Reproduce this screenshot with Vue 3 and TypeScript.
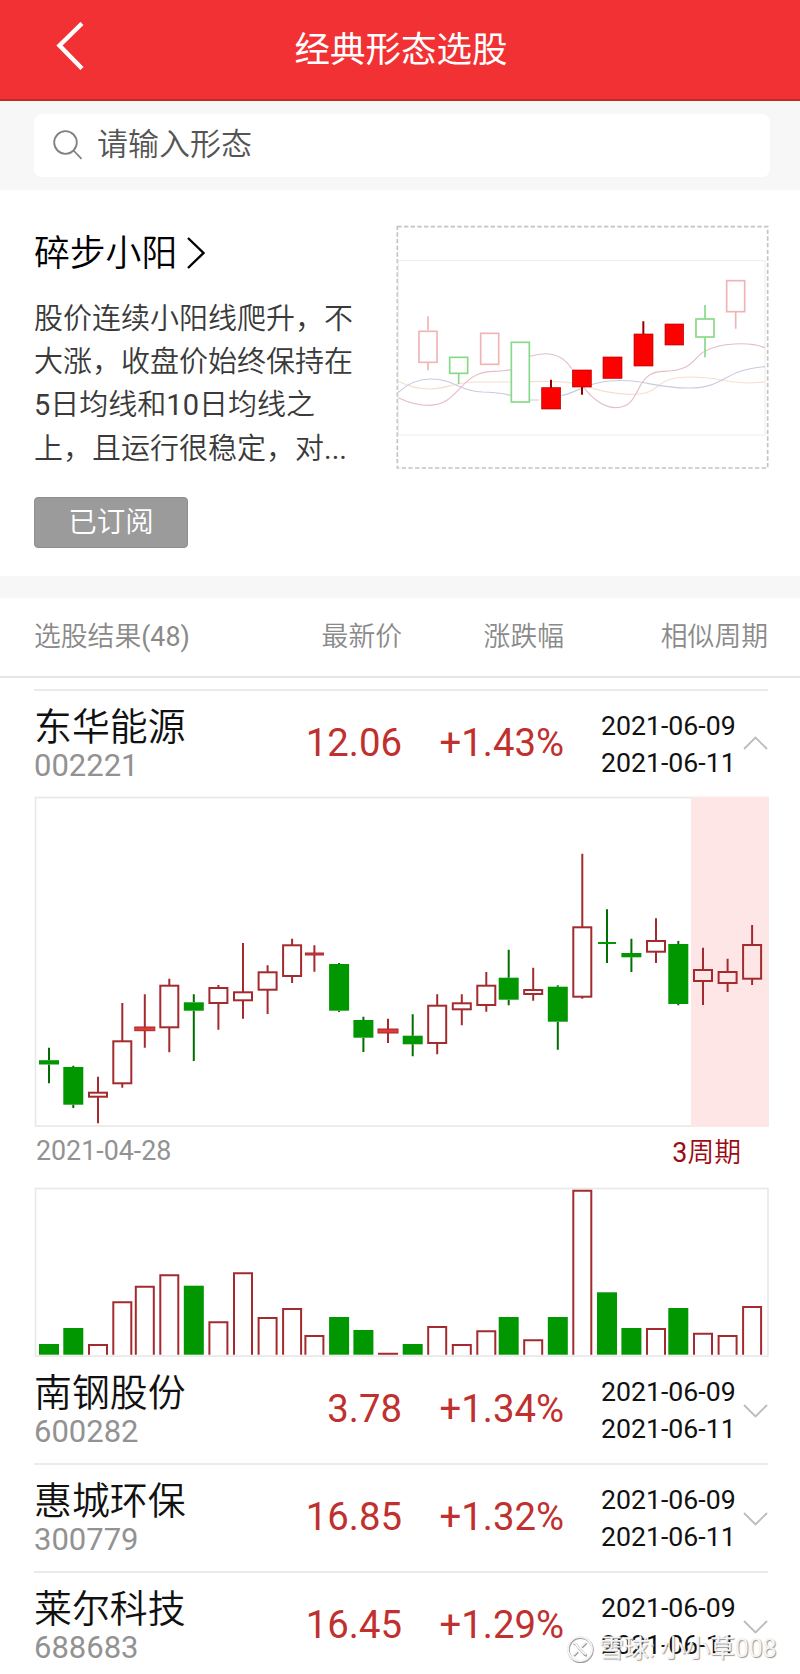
<script setup lang="ts">
type Tone = 'up' | 'down'
// x centre, wick top, body top, body bottom, wick bottom, tone, volume top
type Candle = [number, number, number, number, number, Tone, number]

interface Stock {
  name: string
  code: string
  price: string
  change: string
  from: string
  to: string
}

const candles: Candle[] = [
  [49, 1047.8, 1060.2, 1064.5, 1083.3, 'down', 1344],
  [73.3, 1065.7, 1067, 1104.7, 1108, 'down', 1328],
  [98, 1076.7, 1091.7, 1097.7, 1123.3, 'up', 1344],
  [122.3, 1003, 1040.3, 1084.3, 1087.7, 'up', 1301.3],
  [144.8, 994.3, 1027, 1030.7, 1047.7, 'up', 1285.7],
  [169.3, 978.7, 984.7, 1028.3, 1052.3, 'up', 1274.3],
  [193.8, 994.3, 1002.3, 1010.7, 1061, 'down', 1285.7],
  [218.4, 985, 987, 1004, 1029.7, 'up', 1321.3],
  [243, 943, 991.3, 1001.3, 1018.7, 'up', 1272.3],
  [267.6, 965.3, 971.3, 990.7, 1014, 'up', 1317],
  [292.1, 938.7, 944.3, 977, 983, 'up', 1308],
  [314.4, 945.3, 953, 955, 971.7, 'up', 1335],
  [339.1, 963, 964, 1010.7, 1012, 'down', 1317],
  [363.4, 1016.7, 1020, 1037.7, 1052, 'down', 1330],
  [388, 1018.7, 1029, 1033, 1043, 'up', 1352.7],
  [412.7, 1014.3, 1035.7, 1044.3, 1056.3, 'down', 1344],
  [437.2, 994.3, 1004.7, 1044, 1054.3, 'up', 1326],
  [461.8, 994.3, 1002.3, 1010.3, 1025.3, 'up', 1344],
  [486.3, 972, 984.7, 1006, 1011.7, 'up', 1330.3],
  [508.7, 949.7, 977.7, 999.7, 1005.3, 'down', 1317],
  [533.2, 967.7, 989, 995, 1000.7, 'up', 1339.3],
  [557.8, 985.3, 986.7, 1021.7, 1049.7, 'down', 1317],
  [582.3, 853.7, 926.3, 997.7, 998.7, 'up', 1189.7],
  [607, 909.3, 942, 944, 963, 'down', 1292.3],
  [631.4, 938.7, 953, 957.3, 972, 'down', 1328],
  [656, 918.3, 940, 952.7, 963, 'up', 1328],
  [678.3, 941, 944, 1004, 1005.3, 'down', 1308],
  [703, 947.7, 969, 982, 1005, 'up', 1332.7],
  [727.6, 958.7, 971, 984, 992, 'up', 1335],
  [752.1, 925, 944, 979.7, 985, 'up', 1306],
]

const baseline = 1354.7

const bars = candles.map(([x, high, top, bottom, low, tone, volume]) => {
  const height = bottom - top
  const half = height < 3 ? 9 : 10
  const hollow = tone === 'up' && height > 5
  const inset = hollow ? 1 : 0
  return {
    tone,
    hollow,
    wick: `M${x} ${high}V${top + inset}M${x} ${bottom - inset}V${low}`,
    x: x - half + inset,
    y: top + inset,
    w: (half - inset) * 2,
    h: height - inset * 2,
    vx: x - 10,
    vy: volume,
    vh: baseline - volume,
    volume: `M${x - 9} ${baseline}V${volume + 1}H${x + 9}V${baseline}`,
  }
})

const featured: Stock = {
  name: '东华能源', code: '002221', price: '12.06', change: '+1.43%', from: '2021-06-09', to: '2021-06-11',
}
const others: Stock[] = [
  { name: '南钢股份', code: '600282', price: '3.78', change: '+1.34%', from: '2021-06-09', to: '2021-06-11' },
  { name: '惠城环保', code: '300779', price: '16.85', change: '+1.32%', from: '2021-06-09', to: '2021-06-11' },
  { name: '莱尔科技', code: '688683', price: '16.45', change: '+1.29%', from: '2021-06-09', to: '2021-06-11' },
]
</script>

<template>
  <div class="page">
    <header class="bar">
      <svg class="back" width="28" height="48" viewBox="0 0 28 48">
        <path d="M26 1.5L3.5 23.5L26 46.5" />
      </svg>
      <h1>经典形态选股</h1>
    </header>

    <div class="search-wrap">
      <div class="search">
        <svg width="30" height="30" viewBox="0 0 30 30">
          <circle cx="12.5" cy="12.5" r="11.3" />
          <path d="M20.5 20.5L28.5 28.8" />
        </svg>
        <span>请输入形态</span>
      </div>
    </div>

    <section class="pattern">
      <div class="intro">
        <h2>
          <span>碎步小阳</span>
          <svg width="20" height="34" viewBox="0 0 20 34"><path d="M2 2L17.5 17L2 32" /></svg>
        </h2>
        <p>股价连续小阳线爬升，不<br />大涨，收盘价始终保持在<br /><span class="latin">5</span>日均线和<span class="latin">10</span>日均线之<br />上，且运行很稳定，对<span class="latin">...</span></p>
        <button type="button">已订阅</button>
      </div>
      <svg class="preview" width="374" height="245" viewBox="50 46 1122 735">
        <rect class="dash" x="54" y="51" width="1111" height="724" />
        <rect class="inner" x="57" y="153" width="1100" height="523" />
        <path class="ma orange" d="M57 515C90 532 115 538 150 538C200 538 225 517 290 517L395 517M452 516C510 514 560 514 600 524C660 542 690 552 750 554C860 556 810 503 930 502C1020 502 1040 520 1110 520L1157 517" />
        <path class="ma blue" d="M57 548C85 522 115 508 155 508C225 508 240 545 310 547C350 547 370 552 395 557M452 571H480M546 558C590 550 620 520 690 514C800 506 810 535 930 535C1040 535 1030 480 1157 471" />
        <path class="ma pink" d="M57 564C90 580 115 587 150 587C240 587 240 487 340 485C360 485 378 483 395 480M452 440C510 422 550 435 577 477M613 533C650 580 680 594 710 594C790 594 760 488 850 485C950 483 940 440 978 424C1020 400 1110 395 1157 414" />
        <g class="pink-candle">
          <path d="M146 320V362M146 459V482M1069 307V357" />
          <rect x="119" y="365" width="54" height="93" />
          <rect x="304" y="371" width="54" height="93" />
          <rect x="1042" y="213" width="54" height="93" />
        </g>
        <g class="green-candle">
          <path d="M238 492V523M977 286V327M977 383V443" />
          <rect x="211" y="443" width="54" height="48" />
          <rect x="396" y="398" width="54" height="179" />
          <rect x="950" y="328" width="54" height="54" />
        </g>
        <g class="red-candle">
          <path d="M515 510V535M608 530V555M792 335V373" />
          <rect x="487" y="534" width="57" height="64" />
          <rect x="579" y="481" width="57" height="51" />
          <rect x="671" y="442" width="57" height="64" />
          <rect x="764" y="373" width="57" height="96" />
          <rect x="857" y="343" width="56" height="63" />
        </g>
      </svg>
    </section>

    <div class="columns">
      <span>选股结果<span class="latin">(48)</span></span>
      <span class="num">最新价</span>
      <span class="num">涨跌幅</span>
      <span class="num">相似周期</span>
    </div>

    <main class="list">
      <article class="row">
        <div class="who"><b>{{ featured.name }}</b><i>{{ featured.code }}</i></div>
        <span class="figure">{{ featured.price }}</span>
        <span class="figure">{{ featured.change }}</span>
        <div class="dates"><span>{{ featured.from }}</span><span>{{ featured.to }}</span></div>
        <svg class="fold" width="25" height="14" viewBox="0 0 25 14"><path d="M1 13L12.5 1.5L24 13" /></svg>
      </article>

      <svg class="chart" width="736" height="331" viewBox="34 796 736 331">
        <rect class="frame" x="35.5" y="797.5" width="732.5" height="328.5" />
        <rect class="window" x="691" y="797" width="77.6" height="330" />
        <g v-for="(b, i) in bars" :key="i" :class="[b.tone, { hollow: b.hollow }]">
          <path :d="b.wick" />
          <rect :x="b.x" :y="b.y" :width="b.w" :height="b.h" />
        </g>
      </svg>
      <div class="axis"><span>2021-04-28</span><em><span class="latin">3</span>周期</em></div>
      <svg class="chart" width="736" height="170" viewBox="34 1187 736 170">
        <rect class="frame" x="35.5" y="1188.5" width="732.5" height="167.5" />
        <g v-for="(b, i) in bars" :key="i" :class="['vol', b.tone]">
          <path v-if="b.tone === 'up'" :d="b.volume" />
          <rect v-else :x="b.vx" :y="b.vy" width="20" :height="b.vh" />
        </g>
      </svg>

      <article v-for="s in others" :key="s.code" class="row lined">
        <div class="who"><b>{{ s.name }}</b><i>{{ s.code }}</i></div>
        <span class="figure">{{ s.price }}</span>
        <span class="figure">{{ s.change }}</span>
        <div class="dates"><span>{{ s.from }}</span><span>{{ s.to }}</span></div>
        <svg class="fold" width="25" height="14" viewBox="0 0 25 14"><path d="M1 1L12.5 12.5L24 1" /></svg>
      </article>
    </main>

    <div class="watermark">
      <svg width="28" height="28" viewBox="0 0 28 28">
        <circle class="shade" cx="14.6" cy="14.8" r="12" />
        <circle class="ring" cx="14" cy="14" r="12" />
        <path class="shade" d="M7.5 8.5C12 9 11.5 13 14 14.5C16.5 16 17 20 21 20.5M20.5 8L16 12.5M12 17L8 21" />
        <path class="ring" d="M6.8 7.5C11.3 8 10.8 12 13.3 13.5C15.8 15 16.3 19 20.3 19.5M19.8 7L15.3 11.5M11.3 16L7.3 20" />
      </svg>
      <span>雪球: 小小草008</span>
    </div>
  </div>
</template>

<style>
body {
  margin: 0;
  background: #fff;
}
</style>

<style scoped>
.page {
  position: relative;
  width: 800px;
  height: 1674px;
  overflow: hidden;
  background: #fff;
  font-family: Roboto, "Noto Sans CJK SC", sans-serif;
  font-weight: 350;
  color: #111;
}
.latin {
  font-weight: 400;
}
svg {
  display: block;
  flex: none;
  fill: none;
}
.bar {
  box-sizing: border-box;
  display: grid;
  grid-template-columns: 100px 1fr 98px;
  align-items: center;
  height: 101px;
  background: #f13133;
  border-bottom: 2px solid #c22a26;
}
.back {
  margin: -7px 0 0 56px;
}
.back path {
  stroke: #fff;
  stroke-width: 4.4;
}
h1 {
  margin: 0;
  color: #fff;
  font-size: 35.5px;
  font-weight: 400;
  text-align: center;
  line-height: 50px;
}
.search-wrap {
  box-sizing: border-box;
  height: 89px;
  padding: 13px 30px 0 34px;
  background: #f7f7f7;
}
.search {
  box-sizing: border-box;
  display: flex;
  align-items: center;
  gap: 14px;
  height: 63px;
  padding: 0 0 2px 19px;
  border-radius: 8px;
  background: #fff;
  color: #555;
  font-size: 31px;
  line-height: 40px;
}
.search svg {
  margin-top: 1px;
}
.search svg * {
  stroke: #808080;
  stroke-width: 1.8;
}
.pattern {
  box-sizing: border-box;
  display: flex;
  justify-content: space-between;
  height: 386px;
  padding: 35px 30px 0 34px;
}
h2 {
  display: flex;
  align-items: center;
  gap: 9px;
  margin: 0;
  height: 54px;
  font-size: 35.8px;
  font-weight: 350;
  color: #000;
}
h2 span {
  margin-top: -5px;
}
h2 svg {
  margin-top: 2px;
}
h2 path {
  stroke: #000;
  stroke-width: 2.4;
}
p {
  margin: 19px 0 0;
  font-size: 29px;
  line-height: 43.2px;
  color: #3a3a3a;
  white-space: nowrap;
}
button {
  display: block;
  width: 154px;
  height: 51px;
  margin-top: 26px;
  padding: 0 0 5px;
  border: 1px solid #8e8e8e;
  border-radius: 4px;
  background: #9b9b9b;
  color: #fff;
  font: 350 28.5px Roboto, "Noto Sans CJK SC", sans-serif;
}
.dash {
  stroke: #c4c4c4;
  stroke-width: 5;
  stroke-dasharray: 13 7;
}
.inner {
  stroke: #ededed;
  stroke-width: 3;
}
.ma {
  stroke-width: 3.4;
}
.orange {
  stroke: #f5dfd2;
}
.blue {
  stroke: #c9cbdc;
}
.pink {
  stroke: #e5bcc8;
}
.pink-candle * {
  stroke: #f0b4b6;
  stroke-width: 5;
}
.green-candle * {
  stroke: #86d987;
  stroke-width: 5;
}
.red-candle path {
  stroke: #960000;
  stroke-width: 6;
}
.red-candle rect {
  fill: #fd0000;
  stroke: #b80000;
  stroke-width: 2;
}
.columns {
  box-sizing: border-box;
  display: grid;
  grid-template-columns: 200px 168px 162px 204px;
  align-items: center;
  height: 102px;
  padding: 0 0 5px 34px;
  border-top: 22px solid #f7f7f7;
  border-bottom: 2px solid #e6e6e6;
  color: #8a8a8a;
  font-size: 26.8px;
  white-space: nowrap;
}
.num {
  text-align: right;
}
.list {
  margin: 11px 32px 0 34px;
}
.list > .row:first-child {
  border-top: 2px solid #ebebeb;
}
.row {
  box-sizing: border-box;
  display: grid;
  grid-template-columns: 200px 168px 162px 179px 25px;
  height: 108px;
  padding-top: 16px;
}
.list > .row:first-child {
  height: 107px;
}
.lined {
  position: relative;
}
.lined::after {
  content: "";
  position: absolute;
  left: 0;
  right: 0;
  bottom: 0;
  width: 734px;
  height: 2px;
  background: #ebebeb;
}
.who b,
.who i {
  display: block;
  font-style: normal;
  font-weight: 400;
  white-space: nowrap;
}
.who b {
  font-size: 37.9px;
  font-weight: 350;
  line-height: 40px;
}
.who i {
  font-size: 31px;
  line-height: 38px;
  color: #929292;
}
.figure {
  text-align: right;
  padding-top: 16px;
  font-size: 38.3px;
  font-weight: 400;
  line-height: 40px;
  color: #c0302f;
}
.dates {
  margin-left: 37px;
  padding-top: 1px;
  font-size: 26.7px;
  font-weight: 400;
  line-height: 37px;
}
.dates span {
  display: block;
}
.fold {
  margin-top: 29px;
}
.lined .fold {
  margin-top: 31px;
}
.fold path {
  stroke: #bcbcbc;
  stroke-width: 1.8;
}
.frame {
  stroke: #e8e8e8;
  stroke-width: 1.6;
}
.window {
  fill: #ffe6e6;
}
.up path,
.up rect {
  stroke: #a32a2e;
  stroke-width: 2;
}
.up rect {
  fill: #e53935;
  stroke-width: 1;
}
.hollow.up rect {
  fill: none;
  stroke-width: 2;
}
.down path {
  stroke: #006e00;
  stroke-width: 2;
}
.down rect {
  fill: #009700;
}
.axis {
  display: flex;
  justify-content: space-between;
  height: 60px;
  padding: 0 27px 0 2px;
  font-size: 26.8px;
  line-height: 48px;
}
.axis > span {
  font-weight: 400;
  color: #929292;
}
.axis em {
  font-style: normal;
  line-height: 52px;
  color: #9c0a12;
}
.watermark {
  position: absolute;
  left: 566px;
  top: 1629px;
  display: flex;
  align-items: center;
  gap: 5px;
  font-size: 25px;
  font-weight: 400;
  letter-spacing: -0.2px;
  line-height: 40px;
  color: #f4f4f4;
  white-space: nowrap;
  text-shadow: 1px 1px 1px #999;
}
.watermark .shade {
  stroke: #999;
  stroke-width: 2.4;
}
.watermark .ring {
  stroke: #f4f4f4;
  stroke-width: 2;
}
</style>
